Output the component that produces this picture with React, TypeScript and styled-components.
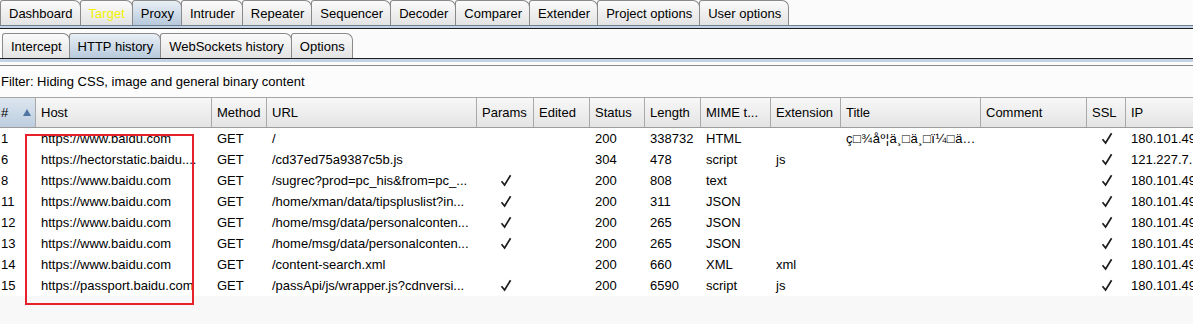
import React from "react";
import styled, { createGlobalStyle, css } from "styled-components";

const GlobalStyle = createGlobalStyle`
  html, body { margin: 0; padding: 0; background: #f8f8f8; }
  body { font-family: "Liberation Sans", Arial, sans-serif; font-size: 13px; color: #000; }
  * { box-sizing: border-box; }
`;

const Page = styled.div`
  width: 1193px;
  height: 324px;
  overflow: hidden;
  background: #f8f8f8;
  display: flex;
  flex-direction: column;
`;

const TabRow = styled.div<{ $indent?: number }>`
  display: flex;
  align-items: flex-end;
  height: 25px;
  padding-left: ${(p) => p.$indent ?? 0}px;
  background: #fbfbfb;
`;

const Tab = styled.div<{ $active?: boolean; $highlight?: boolean }>`
  height: 25px;
  display: flex;
  align-items: center;
  padding: 1px 7px 0 8px;
  margin-right: -1px;
  border: 1px solid #8a8a8a;
  border-bottom: none;
  border-radius: 3px 7px 0 0;
  background: linear-gradient(#fbfbfb, #e3e3e3);
  color: ${(p) => (p.$highlight ? "#f2f200" : "#000")};
  white-space: nowrap;
  ${(p) =>
    p.$active &&
    css`
      background: linear-gradient(#e9eff5, #b7c9dc);
    `}
`;

const TopStrip = styled.div`
  height: 4px;
  border-top: 1px solid #6f8095;
  background: #c3d3e5;
  border-bottom: 1px solid #1e1e1e;
`;

const SubPanel = styled.div`
  background: #fcfcfc;
  padding-top: 4px;
`;

const SubStrip = styled.div`
  height: 4px;
  border-top: 1px solid #1e1e1e;
  background: #c3d3e5;
`;

const Gap = styled.div`
  height: 3px;
  background: #fcfcfc;
`;

const FilterBar = styled.div`
  height: 32px;
  border-top: 1px solid #8a8a8a;
  background: #fcfcfc;
  display: flex;
  align-items: center;
  padding-left: 1px;
`;

const COLS = "36px 176px 55px 210px 57px 56px 55px 56px 70px 70px 140px 106px 39px 100px";

const TableArea = styled.div`
  position: relative;
  flex: 1;
  overflow: hidden;
`;

const HeaderRow = styled.div`
  display: grid;
  grid-template-columns: ${COLS};
  height: 31px;
  border-top: 1px solid #a6a6a6;
  border-bottom: 1px solid #9c9c9c;
  width: 1226px;
`;

const HeaderCell = styled.div<{ $sorted?: boolean }>`
  display: flex;
  align-items: center;
  justify-content: space-between;
  padding: 0 4px 0 5px;
  border-right: 1px solid #a9a9a9;
  background: ${(p) =>
    p.$sorted ? "linear-gradient(#dde6ef, #bccddf)" : "linear-gradient(#f7f7f7, #e4e4e4)"};
  white-space: nowrap;
  overflow: hidden;
  &:first-child {
    padding-left: 1px;
  }
`;

const SortArrow = styled.span`
  width: 0;
  height: 0;
  border-left: 4px solid transparent;
  border-right: 4px solid transparent;
  border-bottom: 7px solid #4f76a3;
  margin-right: 0;
`;

const Row = styled.div`
  display: grid;
  grid-template-columns: ${COLS};
  height: 21px;
  background: #ffffff;
  width: 1226px;
`;

const Cell = styled.div<{ $center?: boolean; $first?: boolean }>`
  display: flex;
  align-items: center;
  justify-content: ${(p) => (p.$center ? "center" : "flex-start")};
  padding-left: ${(p) => (p.$center ? 0 : p.$first ? 1 : 5)}px;
  white-space: nowrap;
  overflow: hidden;
`;

const TitleText = styled.span`
  letter-spacing: 0.5px;
`;

const Highlight = styled.div`
  position: absolute;
  left: 25px;
  top: 37px;
  width: 169px;
  height: 171px;
  border: 2px solid #e8202a;
  pointer-events: none;
`;

const Check = () => (
  <svg width="12" height="13" viewBox="0 0 12 13">
    <path
      d="M1.5 7.2 L4.6 11 L10.6 1.2"
      fill="none"
      stroke="#1c1c1c"
      strokeWidth="1.7"
      strokeLinejoin="miter"
      strokeLinecap="butt"
    />
  </svg>
);

const topTabs = [
  "Dashboard",
  "Target",
  "Proxy",
  "Intruder",
  "Repeater",
  "Sequencer",
  "Decoder",
  "Comparer",
  "Extender",
  "Project options",
  "User options",
];

const subTabs = ["Intercept", "HTTP history", "WebSockets history", "Options"];

const headers = [
  "#",
  "Host",
  "Method",
  "URL",
  "Params",
  "Edited",
  "Status",
  "Length",
  "MIME t...",
  "Extension",
  "Title",
  "Comment",
  "SSL",
  "IP",
];

type Entry = {
  n: string;
  host: string;
  url: string;
  params: boolean;
  status: string;
  length: string;
  mime: string;
  ext: string;
  title: string;
  ip: string;
};

const B = "\u25A1";

const rows: Entry[] = [
  { n: "1", host: "https://www.baidu.com", url: "/", params: false, status: "200", length: "338732", mime: "HTML", ext: "", title: `ç${B}¾åº¦ä¸${B}ä¸${B}ï¼${B}ä...`, ip: "180.101.49" },
  { n: "6", host: "https://hectorstatic.baidu....", url: "/cd37ed75a9387c5b.js", params: false, status: "304", length: "478", mime: "script", ext: "js", title: "", ip: "121.227.7." },
  { n: "8", host: "https://www.baidu.com", url: "/sugrec?prod=pc_his&from=pc_...", params: true, status: "200", length: "808", mime: "text", ext: "", title: "", ip: "180.101.49" },
  { n: "11", host: "https://www.baidu.com", url: "/home/xman/data/tipspluslist?in...", params: true, status: "200", length: "311", mime: "JSON", ext: "", title: "", ip: "180.101.49" },
  { n: "12", host: "https://www.baidu.com", url: "/home/msg/data/personalconten...", params: true, status: "200", length: "265", mime: "JSON", ext: "", title: "", ip: "180.101.49" },
  { n: "13", host: "https://www.baidu.com", url: "/home/msg/data/personalconten...", params: true, status: "200", length: "265", mime: "JSON", ext: "", title: "", ip: "180.101.49" },
  { n: "14", host: "https://www.baidu.com", url: "/content-search.xml", params: false, status: "200", length: "660", mime: "XML", ext: "xml", title: "", ip: "180.101.49" },
  { n: "15", host: "https://passport.baidu.com", url: "/passApi/js/wrapper.js?cdnversi...", params: true, status: "200", length: "6590", mime: "script", ext: "js", title: "", ip: "180.101.49" },
];

export default function App() {
  return (
    <Page>
      <GlobalStyle />
      <TabRow>
        {topTabs.map((t) => (
          <Tab key={t} $active={t === "Proxy"} $highlight={t === "Target"}>
            {t}
          </Tab>
        ))}
      </TabRow>
      <TopStrip />
      <SubPanel>
        <TabRow $indent={2}>
          {subTabs.map((t) => (
            <Tab key={t} $active={t === "HTTP history"}>
              {t}
            </Tab>
          ))}
        </TabRow>
        <SubStrip />
        <Gap />
      </SubPanel>
      <FilterBar>Filter: Hiding CSS, image and general binary content</FilterBar>
      <TableArea>
        <HeaderRow>
          {headers.map((h, i) => (
            <HeaderCell key={h} $sorted={i === 0}>
              <span>{h}</span>
              {i === 0 && <SortArrow />}
            </HeaderCell>
          ))}
        </HeaderRow>
        {rows.map((r) => (
          <Row key={r.n}>
            <Cell $first>{r.n}</Cell>
            <Cell>{r.host}</Cell>
            <Cell>GET</Cell>
            <Cell>{r.url}</Cell>
            <Cell $center>{r.params && <Check />}</Cell>
            <Cell />
            <Cell>{r.status}</Cell>
            <Cell>{r.length}</Cell>
            <Cell>{r.mime}</Cell>
            <Cell>{r.ext}</Cell>
            <Cell>
              <TitleText>{r.title}</TitleText>
            </Cell>
            <Cell />
            <Cell $center>
              <Check />
            </Cell>
            <Cell>{r.ip}</Cell>
          </Row>
        ))}
        <Highlight />
      </TableArea>
    </Page>
  );
}
